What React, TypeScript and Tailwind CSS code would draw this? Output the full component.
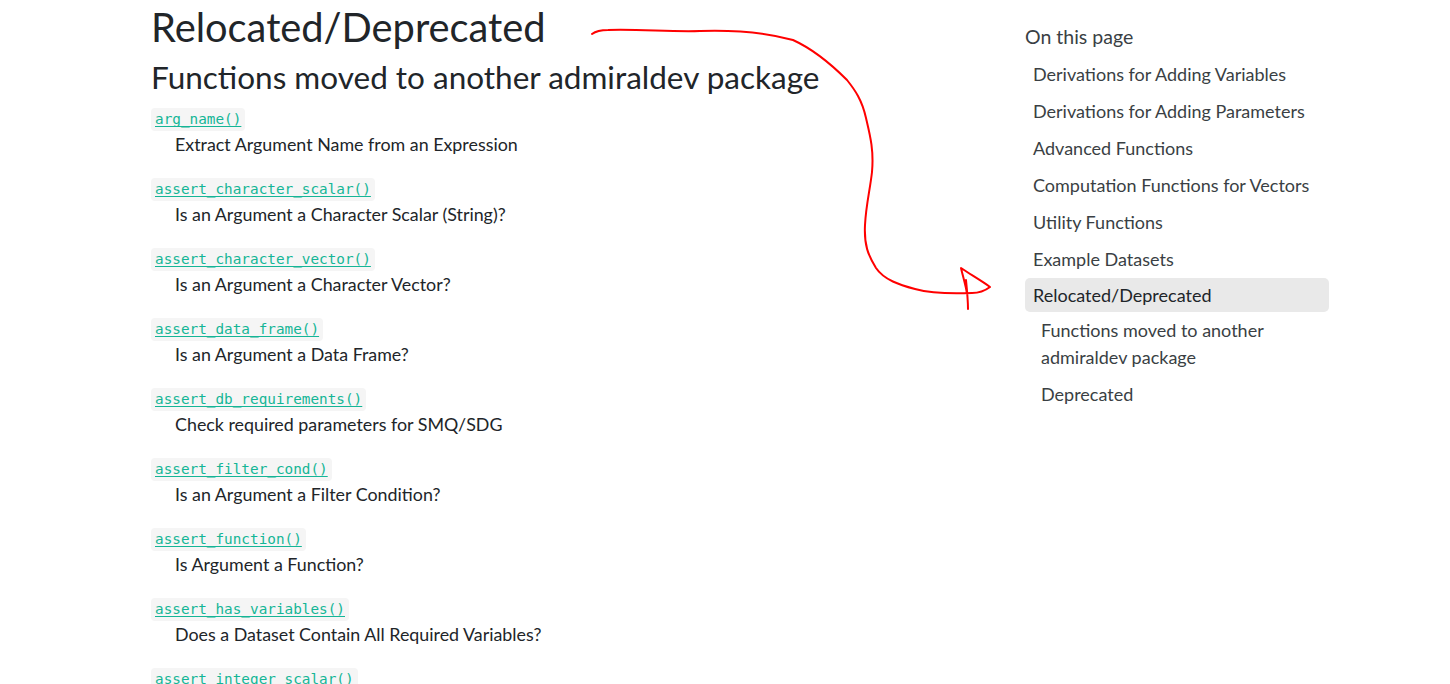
import React from "react";

const items: [string, string][] = [
  ["arg_name()", "Extract Argument Name from an Expression"],
  ["assert_character_scalar()", "Is an Argument a Character Scalar (String)?"],
  ["assert_character_vector()", "Is an Argument a Character Vector?"],
  ["assert_data_frame()", "Is an Argument a Data Frame?"],
  ["assert_db_requirements()", "Check required parameters for SMQ/SDG"],
  ["assert_filter_cond()", "Is an Argument a Filter Condition?"],
  ["assert_function()", "Is Argument a Function?"],
  ["assert_has_variables()", "Does a Dataset Contain All Required Variables?"],
  ["assert_integer_scalar()", "Is an Argument an Integer Scalar?"],
];

const toc = [
  "Derivations for Adding Variables",
  "Derivations for Adding Parameters",
  "Advanced Functions",
  "Computation Functions for Vectors",
  "Utility Functions",
  "Example Datasets",
];

export default function App() {
  return (
    <div
      className="relative h-[684px] w-[1450px] overflow-hidden bg-white text-[#212529]"
      style={{ fontFamily: "Lato, 'Open Sans', sans-serif" }}
    >
      <div className="flex">
        <main className="ml-[151px] w-[860px]">
          <h1 className="mt-[3px] text-[39.8px] leading-[48px] font-normal">Relocated/Deprecated</h1>
          <h2 className="mt-[6px] text-[31.5px] leading-[40px] font-normal">
            Functions moved to another admiraldev package
          </h2>
          <dl className="mt-[9px]">
            {items.map(([code, desc]) => (
              <div key={code} className="h-[70px]">
                <dt className="h-[23px]">
                  <code
                    className="inline-block rounded-[4px] bg-[#f5f5f5] px-[4px] text-[14.35px] leading-[23px] text-[#14b596] underline underline-offset-[2px] decoration-[1px] [text-decoration-skip-ink:none]"
                    style={{ fontFamily: "'DejaVu Sans Mono', 'Liberation Mono', monospace" }}
                  >
                    {code}
                  </code>
                </dt>
                <dd className="ml-[24px] mt-[2px] text-[17.85px] leading-[26px]">{desc}</dd>
              </div>
            ))}
          </dl>
        </main>
        <aside className="ml-[14px] mt-[24px] w-[304px]">
          <h2 className="text-[19.5px] leading-[26px] text-[#3a3f44]">On this page</h2>
          <nav className="mt-[6px] text-[18px] text-[#3a3f44]">
            {toc.map((t) => (
              <div key={t} className="px-[8px] py-[5px] leading-[27px]">
                {t}
              </div>
            ))}
            <div className="rounded-[5px] bg-[#e9e9e9] px-[8px] py-[5px] leading-[24px] text-[#212529]">
              Relocated/Deprecated
            </div>
            <div className="pl-[16px] pr-[8px] py-[5px] leading-[27px]">
              Functions moved to another
              <br />
              admiraldev package
            </div>
            <div className="pl-[16px] pr-[8px] py-[5px] leading-[27px]">Deprecated</div>
          </nav>
        </aside>
      </div>
      <svg
        className="pointer-events-none absolute left-0 top-0"
        width="1450"
        height="684"
        viewBox="0 0 1450 684"
        fill="none"
        stroke="#ff0000"
        strokeWidth="2"
        strokeLinecap="round"
        strokeLinejoin="round"
      >
        <path d="M592 34 C596 31 600 30 608 30 C640 29 670 32 700 31 C730 30 760 31 793 40 C815 50 835 68 847 80 C855 90 862 100 866 118 C870 135 874 150 872 172 C870 190 866 205 865 225 C864 245 868 255 876 268 C884 280 900 285 915 289 C930 293 950 294 972 293 C980 293 986 290 990 287 C982 281 968 273 961 268 C963 277 966 286 967 294 M966 280 C967 290 968 300 968 309" />
      </svg>
    </div>
  );
}
